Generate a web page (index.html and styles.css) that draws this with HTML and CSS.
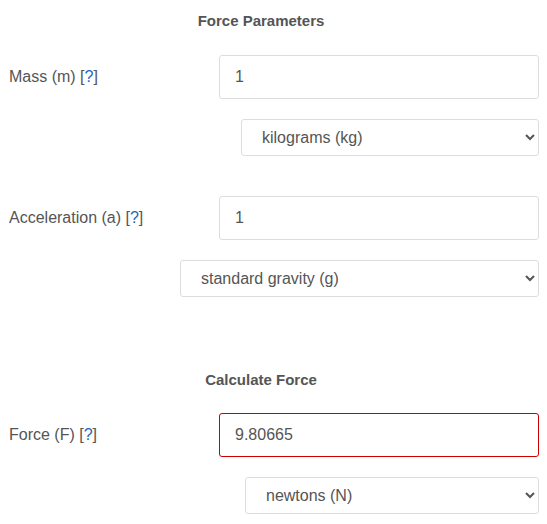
FILE: index.html
```html
<!DOCTYPE html>
<html lang="en">
<head>
    <meta charset="UTF-8">
    <meta name="viewport" content="width=device-width, initial-scale=1.0">
    <title>Force Calculator</title>
    <link rel="stylesheet" href="styles.css">
</head>
<body>
    <div class="calculator">
        <!-- Inputs -->
        <h3 class="section-title">Force Parameters</h3>

        <div class="field-group">
            <div class="field-row">
                <label for="mass">Mass (m) <a href="#" class="help">[<span>?</span>]</a></label>
                <input type="text" id="mass" value="1">
            </div>
            <div class="unit-row">
                <select id="massUnit" class="unit-mass">
                    <option>kilograms (kg)</option>
                    <option>grams (g)</option>
                    <option>pounds (lb)</option>
                </select>
            </div>
        </div>

        <div class="field-group">
            <div class="field-row">
                <label for="accel">Acceleration (a) <a href="#" class="help">[<span>?</span>]</a></label>
                <input type="text" id="accel" value="1">
            </div>
            <div class="unit-row">
                <select id="accelUnit" class="unit-accel">
                    <option>standard gravity (g)</option>
                    <option>meters/second squared</option>
                </select>
            </div>
        </div>

        <!-- Result -->
        <h3 class="section-title result-title">Calculate Force</h3>

        <div class="field-group">
            <div class="field-row">
                <label for="force">Force (F) <a href="#" class="help">[<span>?</span>]</a></label>
                <input type="text" id="force" class="result" value="9.80665">
            </div>
            <div class="unit-row">
                <select id="forceUnit" class="unit-force">
                    <option>newtons (N)</option>
                    <option>kilonewtons (kN)</option>
                </select>
            </div>
        </div>
    </div>
</body>
</html>
```

FILE: styles.css
```css
body {
    margin: 8px;
    font-family: "Liberation Sans", Arial, sans-serif;
    font-size: 16px;
    color: #555;
    background: #fff;
}

.calculator {
    width: 531px;
}

.section-title {
    margin: 4px 0 0;
    padding-right: 25px;
    font-size: 15px;
    line-height: 18px;
    font-weight: bold;
    text-align: center;
    color: #555;
}

.result-title {
    margin-top: 74px;
}

.field-group {
    margin-top: 25px;
}

.field-group + .field-group {
    margin-top: 40px;
}

.result-title + .field-group {
    margin-top: 24px;
}

.field-row {
    display: flex;
    align-items: center;
    justify-content: space-between;
}

.field-row label {
    padding-left: 1px;
}

.help {
    color: #555;
    text-decoration: none;
}

.help span {
    color: #1a66c4;
}

.field-row input {
    box-sizing: border-box;
    width: 320px;
    height: 44px;
    padding: 0 15px;
    border: 1px solid #ddd;
    border-radius: 3px;
    font-family: inherit;
    font-size: 16px;
    color: #555;
    outline: none;
}

.field-row input.result {
    border-color: #c00;
}

.unit-row {
    display: flex;
    justify-content: flex-end;
    margin-top: 20px;
}

.unit-row select {
    box-sizing: border-box;
    height: 37px;
    padding: 0 8px 0 16px;
    border: 1px solid #ddd;
    border-radius: 3px;
    background: #fff;
    font-family: inherit;
    font-size: 16px;
    color: #555;
}

.unit-mass {
    width: 298px;
}

.unit-accel {
    width: 359px;
}

.unit-force {
    width: 294px;
}
```
